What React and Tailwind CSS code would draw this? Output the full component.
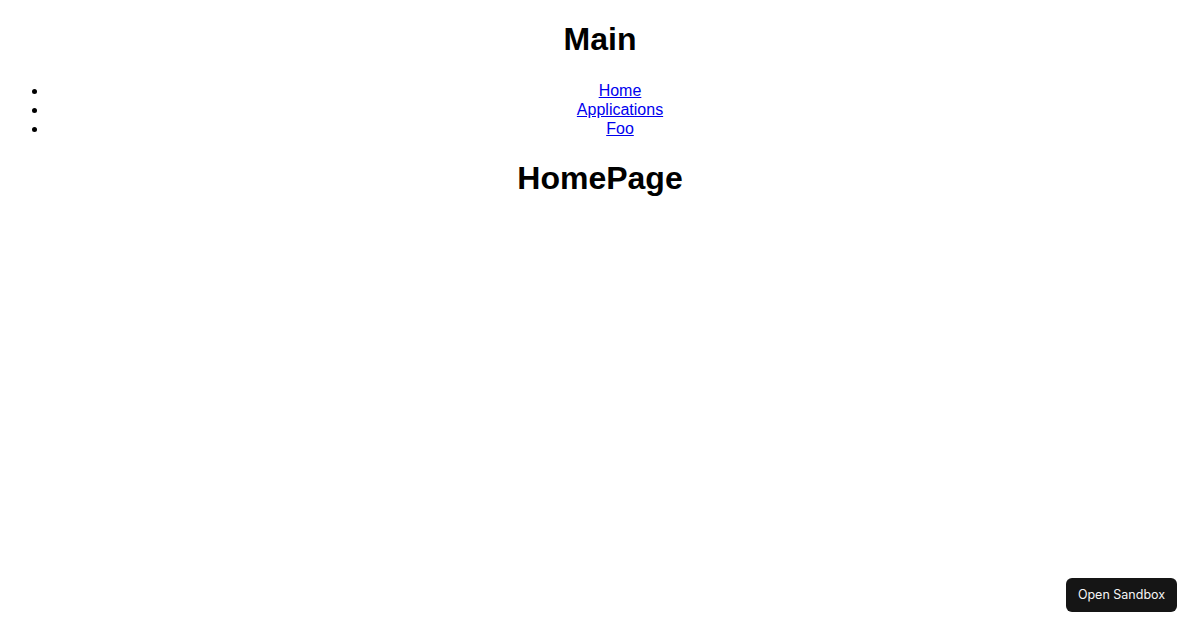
export default function App() {
  return (
    <div className="m-2 font-['Liberation_Sans',Arial,sans-serif] text-base leading-[normal] text-black">
      <h1 className="my-[21.44px] text-center text-[32px] font-bold">Main</h1>
      <ul className="my-[22.5px] list-disc pl-10 leading-[19px]">
        <li className="text-center">
          <a href="#" className="text-[#0000ee] underline">Home</a>
        </li>
        <li className="text-center">
          <a href="#" className="text-[#0000ee] underline">Applications</a>
        </li>
        <li className="text-center">
          <a href="#" className="text-[#0000ee] underline">Foo</a>
        </li>
      </ul>
      <h1 className="my-[21.44px] text-center text-[32px] font-bold">HomePage</h1>
      <button className="fixed right-[23px] bottom-[18px] flex h-[34px] w-[111px] items-center justify-center rounded-md bg-[#151515] pb-[2px] font-['Inter',sans-serif] text-[12.5px] text-[#f5f5f5]">
        Open Sandbox
      </button>
    </div>
  );
}
